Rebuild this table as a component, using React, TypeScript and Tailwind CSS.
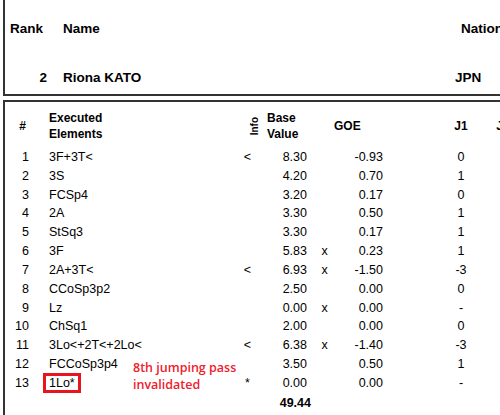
const rows = [
  { n: 1, el: '3F+3T<', info: '<', bv: '8.30', x: '', goe: '-0.93', j1: '0' },
  { n: 2, el: '3S', info: '', bv: '4.20', x: '', goe: '0.70', j1: '1' },
  { n: 3, el: 'FCSp4', info: '', bv: '3.20', x: '', goe: '0.17', j1: '0' },
  { n: 4, el: '2A', info: '', bv: '3.30', x: '', goe: '0.50', j1: '1' },
  { n: 5, el: 'StSq3', info: '', bv: '3.30', x: '', goe: '0.17', j1: '1' },
  { n: 6, el: '3F', info: '', bv: '5.83', x: 'x', goe: '0.23', j1: '1' },
  { n: 7, el: '2A+3T<', info: '<', bv: '6.93', x: 'x', goe: '-1.50', j1: '-3' },
  { n: 8, el: 'CCoSp3p2', info: '', bv: '2.50', x: '', goe: '0.00', j1: '0' },
  { n: 9, el: 'Lz', info: '', bv: '0.00', x: 'x', goe: '0.00', j1: '-' },
  { n: 10, el: 'ChSq1', info: '', bv: '2.00', x: '', goe: '0.00', j1: '0' },
  { n: 11, el: '3Lo<+2T<+2Lo<', info: '<', bv: '6.38', x: 'x', goe: '-1.40', j1: '-3' },
  { n: 12, el: 'FCCoSp3p4', info: '', bv: '3.50', x: '', goe: '0.50', j1: '1' },
  { n: 13, el: '1Lo*', info: '*', bv: '0.00', x: '', goe: '0.00', j1: '-' },
]

export default function App() {
  return (
    <div className="w-[500px] h-[415px] overflow-hidden bg-white text-black font-['Liberation_Sans',Arial,sans-serif]">
      {/* Skater box */}
      <div className="ml-[3px] w-[600px] h-[96px] border-l-2 border-b-2 border-[#333] font-bold text-[13.5px]">
        <div className="flex pt-[21px] leading-[16px]">
          <div className="w-[58px] pl-[5px]">Rank</div>
          <div className="w-[398px]">Name</div>
          <div>Nation</div>
        </div>
        <div className="flex mt-[33px] leading-[16px]">
          <div className="w-[58px] pr-[16px] text-right">2</div>
          <div className="w-[392px]">Riona KATO</div>
          <div>JPN</div>
        </div>
      </div>

      {/* Elements box */}
      <div className="ml-[3px] mt-[4px] w-[600px] h-[400px] border-l-2 border-t-2 border-[#333]">
        <div className="flex items-center h-[32px] mt-[8px] font-bold text-[12px] leading-[16px]">
          <div className="w-[24px] pr-[3px] text-right">#</div>
          <div className="ml-[20px] w-[197px]">
            <div>Executed</div>
            <div>Elements</div>
          </div>
          <div className="w-[15px] flex justify-center">
            <span className="[writing-mode:vertical-rl] rotate-180 text-[10px] leading-[10px] translate-x-[1px]">Info</span>
          </div>
          <div className="w-[73px] pl-[6px]">
            <div>Base</div>
            <div>Value</div>
          </div>
          <div className="w-[107px]">GOE</div>
          <div className="w-[40px] text-center">J1</div>
          <div className="w-[44px] text-center">J2</div>
        </div>

        <div className="mt-[5.6px] text-[12.5px]">
          {rows.map((r) => (
            <div key={r.n} className="flex items-center h-[18.83px] leading-[16px]">
              <div className="w-[24px] text-right">{r.n}</div>
              <div className="ml-[20px] w-[191px] relative">
                {r.n === 13 ? (
                  <span className="relative inline-block">
                    {r.el}
                    <span className="absolute -left-[6px] -right-[6px] -top-[2px] -bottom-[2px] border-[3px] border-[#e8141e]" />
                  </span>
                ) : (
                  r.el
                )}
                {r.n === 12 && (
                  <div className="absolute left-[84px] top-[2.5px] text-[#f0202c] font-semibold text-[12.5px] leading-[17px] font-['Open_Sans',sans-serif] whitespace-nowrap">
                    <div>8th jumping pass</div>
                    <div>invalidated</div>
                  </div>
                )}
              </div>
              <div className="w-[15px] text-center">{r.info}</div>
              <div className="w-[57px] pr-[5px] text-right">{r.bv}</div>
              <div className="w-[25px] text-center">{r.x}</div>
              <div className="w-[46px] text-right">{r.goe}</div>
              <div className="ml-[58px] w-[40px] text-center">{r.j1}</div>
            </div>
          ))}
          <div className="flex items-center h-[21px] leading-[16px] font-bold">
            <div className="ml-[44px] w-[191px]" />
            <div className="w-[15px]" />
            <div className="w-[57px] pr-[1px] text-right">49.44</div>
          </div>
        </div>
      </div>
    </div>
  )
}
